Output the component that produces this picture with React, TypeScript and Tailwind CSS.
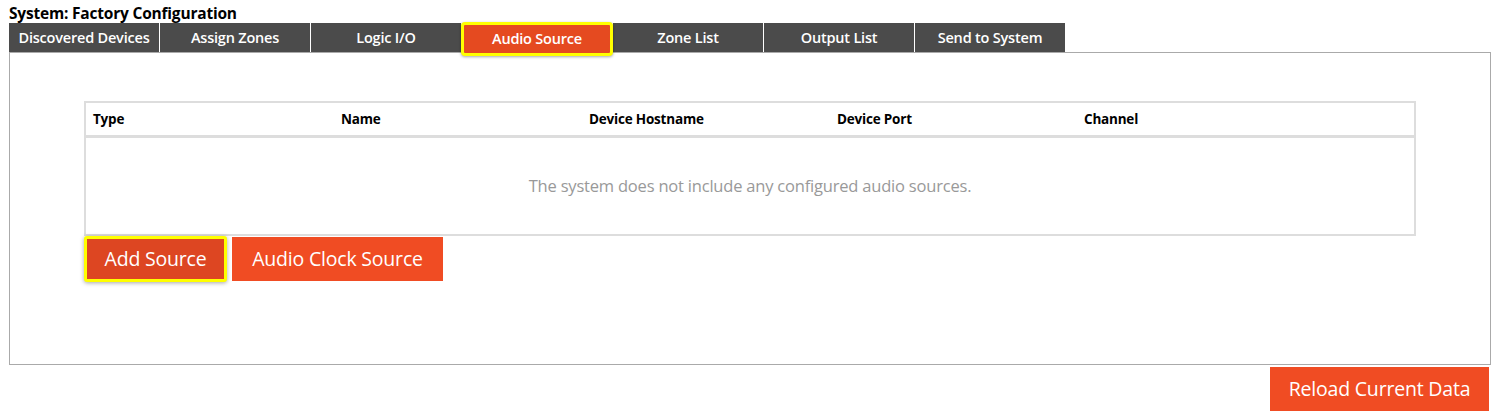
import React from "react";

const tabs = [
  "Discovered Devices",
  "Assign Zones",
  "Logic I/O",
  "Audio Source",
  "Zone List",
  "Output List",
  "Send to System",
];

const columns = ["Type", "Name", "Device Hostname", "Device Port", "Channel"];

export default function App() {
  return (
    <div className="min-h-screen bg-white font-['Open_Sans',sans-serif] text-black">
      <div className="px-[9px] pt-[3px]">
        {/* Title */}
        <div className="text-[15.5px] font-bold leading-[20px] tracking-[-0.2px]">
          System: Factory Configuration
        </div>

        {/* Tabs */}
        <div className="flex h-[29px]">
          {tabs.map((t) => {
            const active = t === "Audio Source";
            return active ? (
              <div key={t} className="w-[151px] h-[29px] relative">
                <div className="absolute -left-[1px] -top-[1px] w-[152px] h-[34px] rounded-[4px] border-[3px] border-[#ffff00] bg-[#e54a20] shadow-[0_1px_3px_rgba(0,0,0,0.35)] flex items-center justify-center text-white text-[14.5px] font-semibold tracking-[-0.2px]">
                  {t}
                </div>
              </div>
            ) : (
              <div
                key={t}
                className="w-[150px] mr-[1px] pt-[1px] bg-[#4b4b4b] flex items-center justify-center text-white text-[14.5px] font-semibold tracking-[-0.2px]"
              >
                {t}
              </div>
            );
          })}
        </div>

        {/* Panel */}
        <div className="border border-[#aaaaaa] h-[313px] pt-[48px] pl-[74px] pr-[74px]">
          <div className="border-2 border-[#dddddd]">
            <div className="grid grid-cols-[248px_248px_248px_247px_1fr] h-[35px] pt-[1px] items-center border-b-[3px] border-[#dddddd] pl-[7px] text-[13.5px] font-bold tracking-[-0.2px]">
              {columns.map((c) => (
                <div key={c}>{c}</div>
              ))}
            </div>
            <div className="h-[96px] flex items-center justify-center text-[#999999] text-[16.5px] tracking-[-0.2px]">
              The system does not include any configured audio sources.
            </div>
          </div>

          <div className="flex gap-[5px]">
            <button className="w-[143px] h-[46px] rounded-[3px] border-[3px] border-[#ffff00] bg-[#dd4622] shadow-[0_1px_4px_rgba(0,0,0,0.35)] text-white text-[19.5px] leading-none tracking-[-0.2px]">
              Add Source
            </button>
            <button className="w-[211px] h-[44px] mt-[1px] bg-[#f04c23] text-white text-[19.5px] leading-none tracking-[-0.2px]">
              Audio Clock Source
            </button>
          </div>
        </div>

        {/* Footer action */}
        <div className="flex justify-end mt-[2px] pr-[2px]">
          <button className="w-[219px] h-[44px] bg-[#f04c23] text-white text-[19.5px] leading-none tracking-[-0.2px]">
            Reload Current Data
          </button>
        </div>
      </div>
    </div>
  );
}
